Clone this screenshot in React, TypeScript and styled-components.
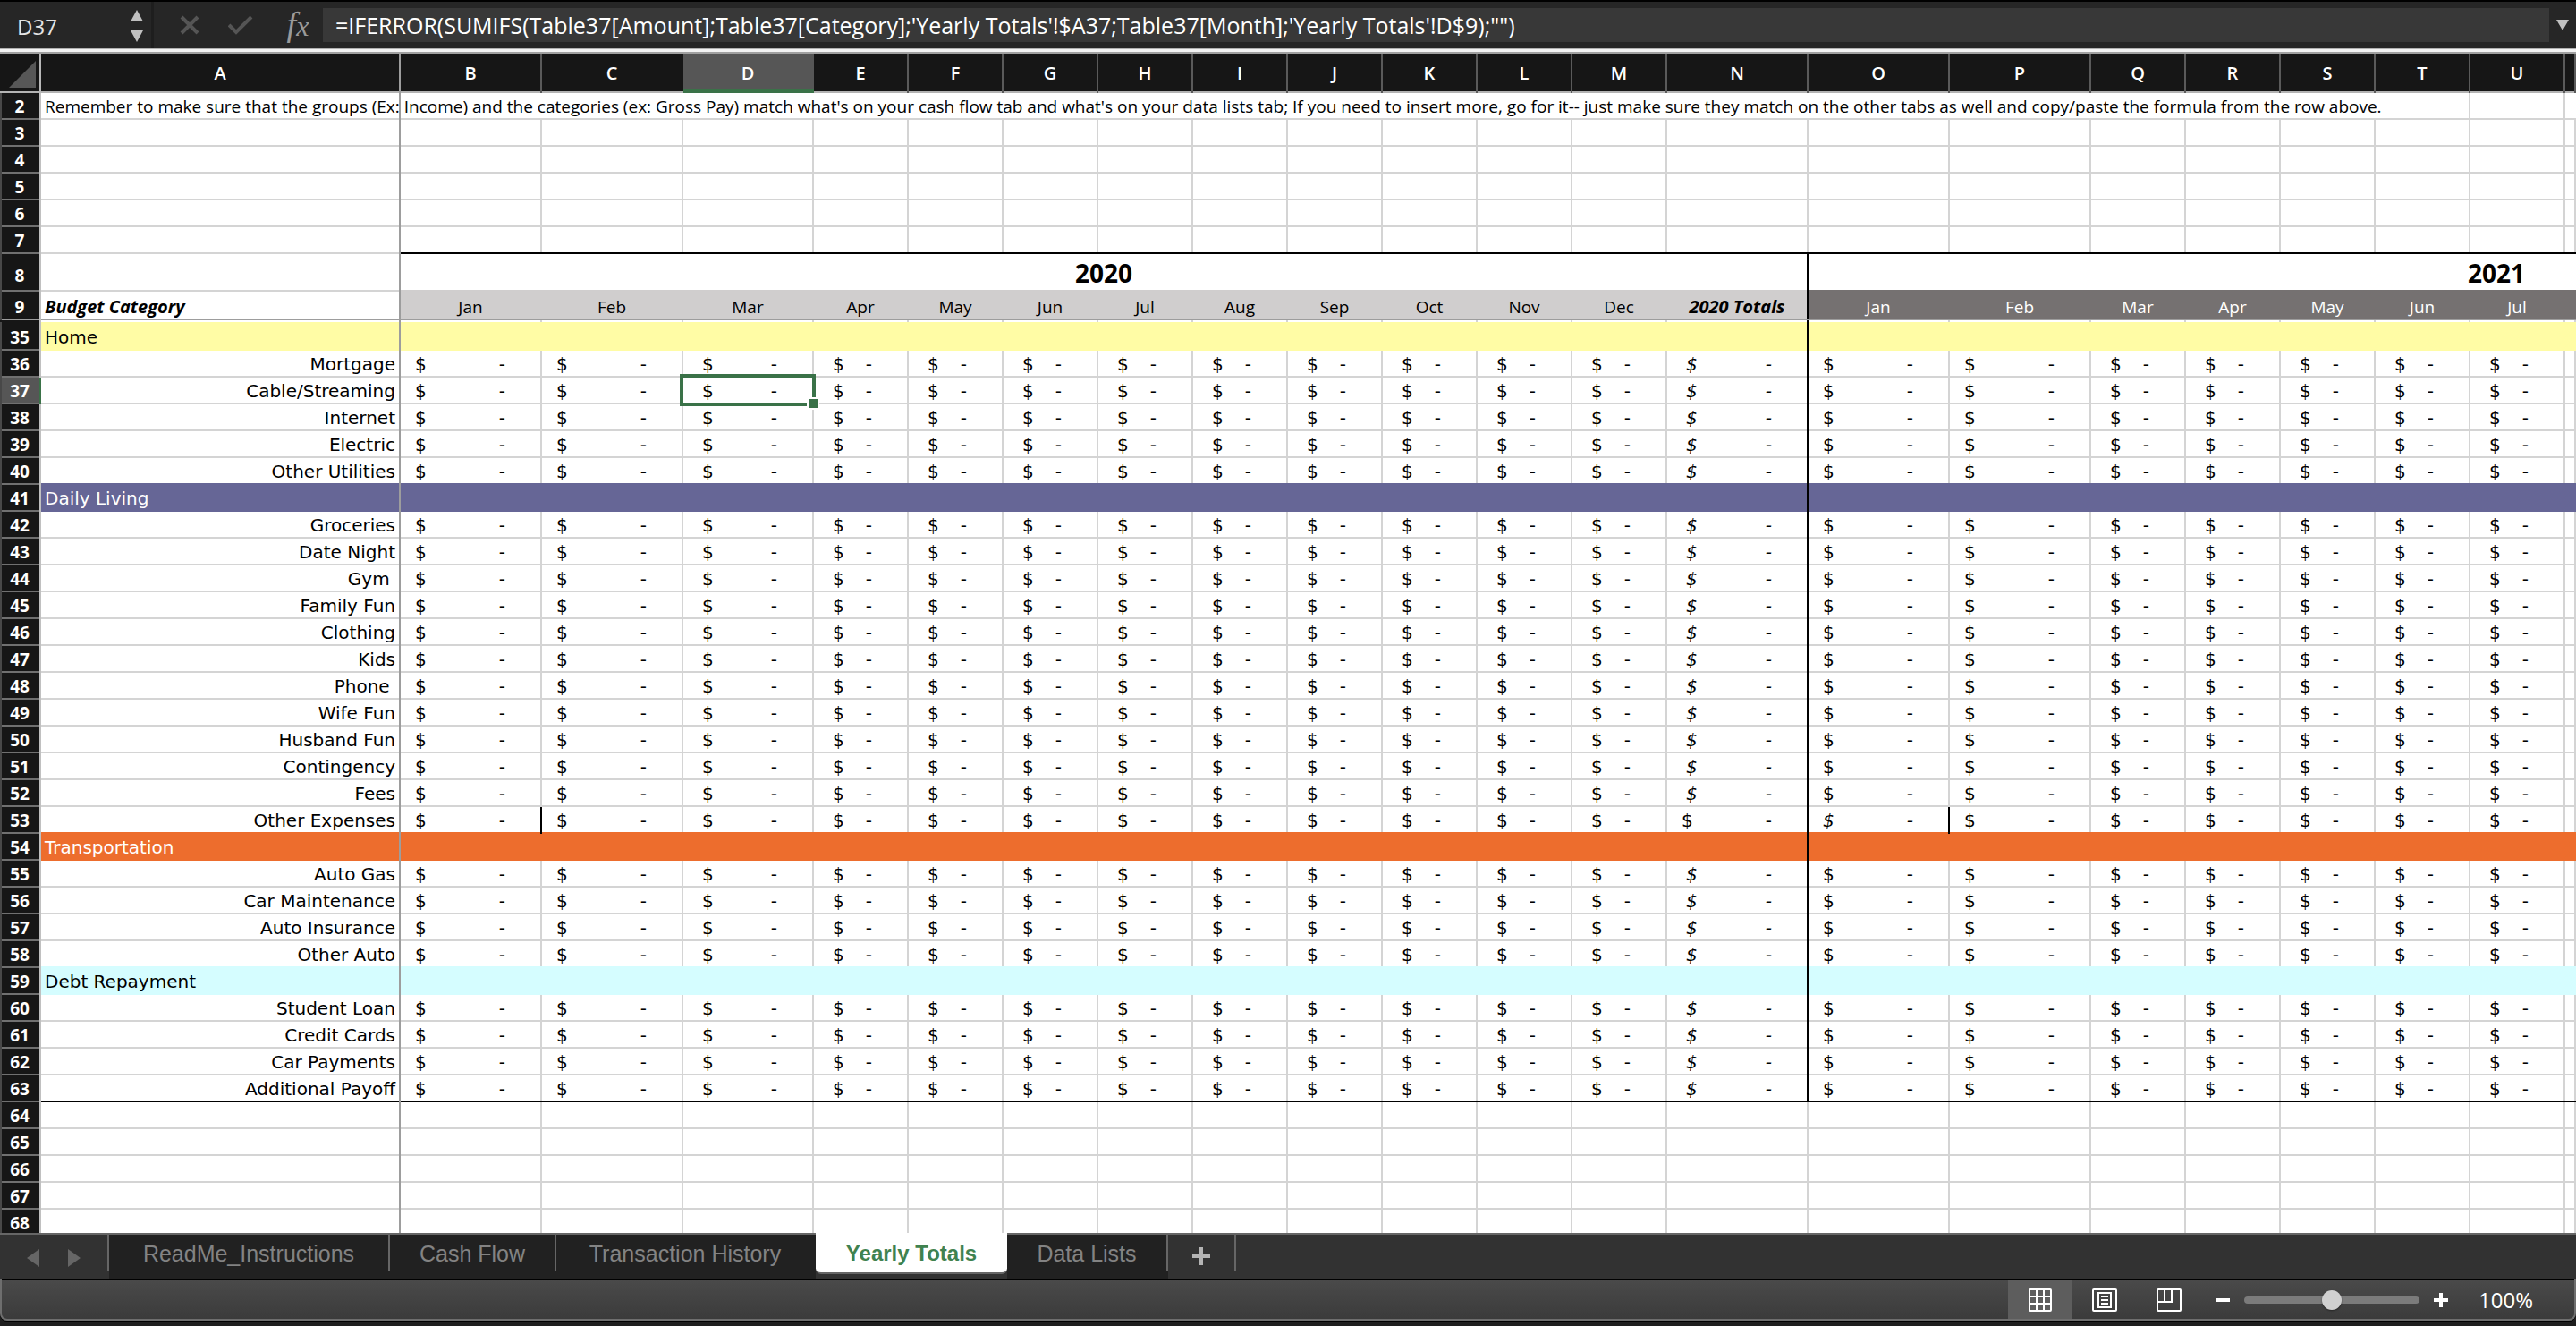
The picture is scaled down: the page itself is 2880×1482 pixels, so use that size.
import React from "react";
import styled, { createGlobalStyle, css } from "styled-components";

const UI = `"Open Sans", "Noto Sans", sans-serif`;
const BODY = `"DejaVu Sans", Verdana, sans-serif`;
const TAB = `"Liberation Sans", Arial, sans-serif`;

const GRID = "#d4d4d4";
const FREEZE = "#9d9d9d";
const BLACK = "#000000";
const GREEN = "#3a7248";
const LIGHT_HEAD = "#d0cece";
const DARK_HEAD = "#757171";

const GlobalStyle = createGlobalStyle`
  *, *::before, *::after { box-sizing: border-box; }
  body { margin: 0; background: #1e1e1e; }
  button, input { font: inherit; color: inherit; border: 0; margin: 0; padding: 0; background: none; }
`;

/* ---------- window ---------- */

const Window = styled.div`
  display: flex;
  flex-direction: column;
  height: 100vh;
  overflow: hidden;
  border-top: 2px solid #000;
  background: #1e1e1e;
  font-family: ${UI};
`;

/* ---------- formula bar ---------- */

const FormulaBar = styled.header`
  display: flex;
  flex: none;
  align-items: center;
  height: 52px;
  background: #262626;
  color: #fff;
`;

const NameBox = styled.div`
  display: flex;
  align-items: center;
  justify-content: space-between;
  align-self: stretch;
  width: 172px;
  padding: 2px 9px 0 19px;
  border-right: 3px solid #1e1e1e;
`;

const NameInput = styled.input`
  width: 100px;
  height: 38px;
  font-size: 24px;
  color: #e4e4e4;
`;

const Stepper = styled.div`
  display: flex;
  flex-direction: column;
  gap: 10px;
`;

const IconButton = styled.button`
  display: grid;
  place-items: center;
  color: ${(p: { $color?: string }) => p.$color ?? "#c0c0c0"};
`;

const Actions = styled.div`
  display: flex;
  align-items: center;
  gap: 32px;
  padding: 0 10px 0 29px;
`;

const FxButton = styled.button`
  width: 36px;
  line-height: 40px;
  font-family: "Liberation Serif", serif;
  font-size: 38px;
  font-style: italic;
  color: #9a9a9a;
  white-space: nowrap;
`;

const FxSmall = styled.span`
  font-size: 32px;
`;

const FormulaInput = styled.input`
  flex: 1;
  min-width: 0;
  height: 38px;
  padding: 0 14px;
  background: #383838;
  font-size: 25px;
`;

const ExpandSlot = styled.div`
  display: grid;
  place-items: center;
  width: 30px;
`;

const Divider = styled.div`
  flex: none;
  height: 6px;
  border-top: 1px solid #b0b0b0;
  border-bottom: 2px solid #a0a0a0;
  background: #f2f2f2;
`;

/* ---------- sheet ---------- */

const SheetArea = styled.main`
  flex: 1;
  min-height: 0;
  overflow: hidden;
  background: #fff;
`;

const Sheet = styled.table`
  width: 100%;
  table-layout: fixed;
  border-collapse: separate;
  border-spacing: 0;
  color: #000;
`;

const Col = styled.col<{ $w?: number }>`
  width: ${(p) => (p.$w ? `${p.$w}px` : "auto")};
`;

const Row = styled.tr<{ $h?: number }>`
  height: ${(p) => p.$h ?? 30}px;
`;

interface LineProps {
  $v?: string;
  $h?: string;
  $bg?: string;
  $hOver?: boolean;
}

/* Every cell draws its own right and bottom rule; heavy rules run over light ones. */
const lines = css<LineProps>`
  ${(p) => {
    const v = p.$v ?? GRID;
    const h = p.$h ?? GRID;
    const right = `linear-gradient(${v}, ${v}) right / 2px 100% no-repeat`;
    const bottom = `linear-gradient(${h}, ${h}) bottom / 100% 2px no-repeat`;
    const hFirst = p.$hOver || v === GRID || v === "transparent";
    const order = hFirst ? [bottom, right] : [right, bottom];
    return `background: ${order.join(", ")}, ${p.$bg ?? "transparent"};`;
  }}
`;

const Corner = styled.th`
  ${lines}
  height: 44px;
  padding: 8px 6px 6px 10px;
  line-height: 0;
`;

const ColumnHead = styled.th<LineProps & { $selected?: boolean }>`
  ${lines}
  padding: 0 2px 2px 0;
  font-size: 20px;
  font-weight: 600;
  color: #fff;
  ${(p) => p.$selected && `box-shadow: inset 0 -4px ${GREEN};`}
`;

const RowHead = styled.th<LineProps & { $drop?: number }>`
  ${lines}
  padding: 0 2px ${(p) => p.$drop ?? 0}px 0;
  box-shadow: inset 2px 0 #484848;
  vertical-align: bottom;
  font-size: 19px;
  line-height: 30px;
  font-weight: 700;
  color: #fff;
`;

const Cell = styled.td<LineProps>`
  ${lines}
  padding: 0;
`;

const Label = styled.td<LineProps & { $align?: string; $color?: string }>`
  ${lines}
  padding: 0 6px 0 4px;
  vertical-align: bottom;
  font-family: ${BODY};
  font-size: 20px;
  line-height: 30px;
  text-align: ${(p) => p.$align ?? "right"};
  color: ${(p) => p.$color ?? "#000"};
  white-space: pre;
`;

const Note = styled(Label)`
  font-family: ${UI};
  font-size: 19px;
  text-align: left;
`;

const SideTitle = styled(Note)`
  font-size: 20px;
  font-style: italic;
  font-weight: 700;
`;

const YearTitle = styled.th<LineProps & { $end?: boolean }>`
  ${lines}
  padding: 0 ${(p) => (p.$end ? 57 : 2)}px 0 0;
  text-align: ${(p) => (p.$end ? "right" : "center")};
  font-size: 28px;
  line-height: 40px;
  font-weight: 700;
`;

const Month = styled.td<LineProps & { $color?: string; $total?: boolean }>`
  ${lines}
  padding: 0 2px 0 0;
  vertical-align: bottom;
  text-align: center;
  font-size: 19px;
  line-height: 30px;
  white-space: nowrap;
  color: ${(p) => p.$color ?? "#000"};
  ${(p) => p.$total && "font-size: 20px; font-style: italic; font-weight: 700;"}
`;

const MoneyCell = styled.td<LineProps>`
  ${lines}
  position: relative;
  padding: 0;
`;

const Money = styled.div<{ $wide?: boolean; $italic?: boolean }>`
  display: flex;
  justify-content: space-between;
  padding: 0 41px 0 ${(p) => (p.$wide ? 16 : 21)}px;
  font-family: ${BODY};
  font-size: 20px;
  line-height: 30px;
  font-style: ${(p) => (p.$italic ? "italic" : "normal")};
`;

const Selection = styled.div`
  position: absolute;
  z-index: 1;
  inset: -4px -2px -2px -4px;
  border: 4px solid ${GREEN};
`;

const FillHandle = styled.div`
  position: absolute;
  z-index: 1;
  right: -6px;
  bottom: -6px;
  width: 14px;
  height: 14px;
  border: 2px solid #fff;
  background: ${GREEN};
`;

/* ---------- sheet tabs ---------- */

const TabBar = styled.nav`
  display: flex;
  flex: none;
  height: 52px;
  border-top: 2px solid #666;
  background: #323232;
`;

const TabNav = styled.div`
  display: flex;
  align-items: flex-start;
  gap: 32px;
  width: 122px;
  height: 41px;
  padding: 16px 0 0 30px;
  border-right: 2px solid #666;
`;

const TabSlot = styled.div<{ $w: number; $active?: boolean }>`
  width: ${(p) => p.$w}px;
  background: ${(p) => (p.$active ? "transparent" : "#212121")};
`;

const TabButton = styled.button<{ $active?: boolean; $rule?: boolean }>`
  display: block;
  width: 100%;
  height: 41px;
  padding-top: 1px;
  font-family: ${TAB};
  font-size: 25px;
  color: #838383;
  white-space: nowrap;
  border-right: 2px solid ${(p) => (p.$rule ? "#666" : "transparent")};
  ${(p) =>
    p.$active &&
    css`
      position: relative;
      height: 46px;
      margin-top: -2px;
      border: 0;
      border-bottom: 2px solid #666;
      border-radius: 0 0 6px 6px;
      background: #fff;
      color: #3f8250;
      font-size: 24px;
      font-weight: 700;
    `}
`;

const AddTab = styled.button`
  display: grid;
  place-items: center;
  width: 76px;
  height: 41px;
  padding-top: 7px;
  border-right: 2px solid #666;
  color: #b4b4b4;
`;

/* ---------- status bar ---------- */

const StatusBar = styled.footer`
  display: flex;
  flex: none;
  align-items: center;
  justify-content: flex-end;
  height: 46px;
  padding: 1px 46px 0 0;
  border: solid #6e6e6e;
  border-width: 0 2px 2px;
  border-radius: 0 0 8px 8px;
  background: linear-gradient(#4a4a4a, #3b3b3b);
  box-shadow: inset 0 1px #000, 0 1px #000;
  margin-bottom: 6px;
  color: #fff;
`;

const ViewButton = styled.button<{ $active?: boolean }>`
  display: grid;
  place-items: center;
  align-self: stretch;
  width: 72px;
  background: ${(p) => (p.$active ? "#5d5d5d" : "transparent")};
`;

const Zoom = styled.div`
  display: flex;
  align-items: center;
  gap: 16px;
  padding-left: 16px;
`;

const Slider = styled.input`
  appearance: none;
  width: 196px;
  height: 22px;
  &::-webkit-slider-runnable-track {
    height: 8px;
    border-radius: 4px;
    background: #7b7b7b;
  }
  &::-webkit-slider-thumb {
    appearance: none;
    width: 22px;
    height: 22px;
    margin-top: -7px;
    border-radius: 50%;
    background: #d0d0d0;
    box-shadow: 0 1px 2px rgba(0, 0, 0, 0.4);
  }
`;

const ZoomValue = styled.output`
  padding-left: 18px;
  font-size: 24px;
  line-height: 30px;
`;

/* ---------- icons ---------- */

const Triangle = ({ d, w, h }: { d: string; w: number; h: number }) => (
  <svg width={w} height={h} viewBox={`0 0 ${w} ${h}`} fill="currentColor" aria-hidden="true">
    <path d={d} />
  </svg>
);

const PlusIcon = ({ size, stroke }: { size: number; stroke: number }) => (
  <svg width={size} height={size} viewBox={`0 0 ${size} ${size}`} stroke="currentColor" strokeWidth={stroke} aria-hidden="true">
    <path d={`M0 ${size / 2}H${size}M${size / 2} 0V${size}`} />
  </svg>
);

const ViewIcon = ({ w, d }: { w: number; d: string }) => (
  <svg width={w} height="26" viewBox={`0 0 ${w} 26`} fill="none" stroke="#fff" strokeWidth="2" aria-hidden="true">
    <rect x="1" y="1" width={w - 2} height="24" rx="1" />
    <path d={d} />
  </svg>
);

/* ---------- data ---------- */

const COLUMNS: { name: string; w?: number }[] = [
  { name: "A", w: 402 },
  { name: "B", w: 158 },
  { name: "C", w: 158 },
  { name: "D", w: 146 },
  ..."EFGHIJKLM".split("").map((name) => ({ name, w: 106 })),
  { name: "N", w: 158 },
  { name: "O", w: 158 },
  { name: "P", w: 158 },
  ..."QRSTU".split("").map((name) => ({ name, w: 106 })),
  { name: "" },
];
const VALUES = COLUMNS.slice(1);

const MONTHS = ["Jan", "Feb", "Mar", "Apr", "May", "Jun", "Jul", "Aug", "Sep", "Oct", "Nov", "Dec"];
const HEADINGS = [...MONTHS, "2020 Totals", ...MONTHS.slice(0, 7), ""];

interface Group {
  name: string;
  bg: string;
  color: string;
  items: string[];
}

const GROUPS: Group[] = [
  { name: "Home", bg: "#fffca5", color: "#000", items: ["Mortgage", "Cable/Streaming", "Internet", "Electric", "Other Utilities"] },
  {
    name: "Daily Living",
    bg: "#666696",
    color: "#fff",
    items: ["Groceries", "Date Night", "Gym ", "Family Fun", "Clothing", "Kids", "Phone ", "Wife Fun", "Husband Fun", "Contingency", "Fees", "Other Expenses"],
  },
  { name: "Transportation", bg: "#ed6d2d", color: "#fff", items: ["Auto Gas", "Car Maintenance", "Auto Insurance", "Other Auto"] },
  { name: "Debt Repayment", bg: "#d5fdff", color: "#000", items: ["Student Loan", "Credit Cards", "Car Payments", "Additional Payoff"] },
];

const NOTE =
  "Remember to make sure that the groups (Ex: Income) and the categories (ex: Gross Pay) match what's on your cash flow tab and what's on your data lists tab; If you need to insert more, go for it-- just make sure they match on the other tabs as well and copy/paste the formula from the row above.";

const FORMULA = `=IFERROR(SUMIFS(Table37[Amount];Table37[Category];'Yearly Totals'!$A37;Table37[Month];'Yearly Totals'!D$9);"")`;

const TABS = [
  { name: "ReadMe_Instructions", w: 314, rule: true },
  { name: "Cash Flow", w: 186, rule: true },
  { name: "Transaction History", w: 290, rule: false },
  { name: "Yearly Totals", w: 214, active: true },
  { name: "Data Lists", w: 180, rule: true },
];

/* ---------- rows ---------- */

const Num = ({ n, drop, selected, h }: { n: number | string; drop?: number; selected?: boolean; h?: string }) => (
  <RowHead scope="row" $drop={drop} $v={selected ? GREEN : "#c0c0c0"} $h={h ?? "#707070"} $bg={selected ? "#565656" : "#161616"}>
    {n}
  </RowHead>
);

const EmptyRow = ({ n, rule }: { n: number; rule?: string }) => (
  <Row>
    <Num n={n} />
    <Cell $v={FREEZE} />
    {VALUES.map((c) => (
      <Cell key={c.name} $h={rule} />
    ))}
  </Row>
);

const BandRow = ({ n, group }: { n: number; group: Group }) => (
  <Row $h={n === 35 ? 32 : 30}>
    <Num n={n} />
    <Label $align="left" $color={group.color} $v={FREEZE} $h={group.bg} $bg={group.bg}>
      {group.name}
    </Label>
    {VALUES.map((c) => (
      <Cell key={c.name} $v={c.name === "N" ? BLACK : group.bg} $h={group.bg} $bg={group.bg} />
    ))}
  </Row>
);

const ItemRow = ({ n, label, rule }: { n: number; label: string; rule?: string }) => {
  const odd = n === 53;
  return (
    <Row>
      <Num n={n} selected={n === 37} />
      <Label $v={FREEZE} $h={rule}>
        {label}
      </Label>
      {VALUES.map(({ name, w }) => {
        const heavy = name === "N" || (odd && (name === "B" || name === "O"));
        const wide = w === 158 && !(name === "N" && !odd);
        return (
          <MoneyCell key={name} $v={heavy ? BLACK : GRID} $h={rule}>
            {name && (
              <Money $wide={wide} $italic={odd ? name === "O" : name === "N"}>
                <span>$</span>
                <span>-</span>
              </Money>
            )}
            {n === 37 && name === "D" && (
              <>
                <Selection />
                <FillHandle />
              </>
            )}
          </MoneyCell>
        );
      })}
    </Row>
  );
};

const budgetRows = () => {
  const out: React.ReactElement[] = [];
  let n = 35;
  GROUPS.forEach((group, g) => {
    out.push(<BandRow key={n} n={n} group={group} />);
    n += 1;
    group.items.forEach((label, i) => {
      const last = i === group.items.length - 1;
      const next = GROUPS[g + 1];
      out.push(<ItemRow key={n} n={n} label={label} rule={last ? (next ? next.bg : BLACK) : undefined} />);
      n += 1;
    });
  });
  return out;
};

export default function App() {
  return (
    <Window>
      <GlobalStyle />
      <FormulaBar>
        <NameBox>
          <NameInput aria-label="Name box" defaultValue="D37" />
          <Stepper>
            <IconButton aria-label="Previous name">
              <Triangle w={14} h={13} d="M7 0 14 13H0Z" />
            </IconButton>
            <IconButton aria-label="Next name">
              <Triangle w={14} h={13} d="M0 0H14L7 13Z" />
            </IconButton>
          </Stepper>
        </NameBox>
        <Actions>
          <IconButton aria-label="Cancel" $color="#555">
            <svg width="22" height="22" viewBox="0 0 22 22" stroke="currentColor" strokeWidth="4" aria-hidden="true">
              <path d="M2 2 20 20M20 2 2 20" />
            </svg>
          </IconButton>
          <IconButton aria-label="Enter" $color="#555">
            <svg width="28" height="22" viewBox="0 0 28 22" fill="none" stroke="currentColor" strokeWidth="4" aria-hidden="true">
              <path d="M1 11 9 19 26 2" />
            </svg>
          </IconButton>
          <FxButton aria-label="Insert function">
            f<FxSmall>x</FxSmall>
          </FxButton>
        </Actions>
        <FormulaInput aria-label="Formula" defaultValue={FORMULA} />
        <ExpandSlot>
          <IconButton aria-label="Expand formula bar">
            <Triangle w={14} h={12} d="M0 0H14L7 12Z" />
          </IconButton>
        </ExpandSlot>
      </FormulaBar>
      <Divider />

      <SheetArea>
        <Sheet>
          <colgroup>
            <Col $w={46} />
            {COLUMNS.map((c) => (
              <Col key={c.name} $w={c.w} />
            ))}
          </colgroup>
          <thead>
            <Row $h={44}>
              <Corner $v="#b8b8b8" $h="#b3b3b3" $bg="#161616">
                <svg width="30" height="30" viewBox="0 0 30 30" aria-hidden="true">
                  <path d="M30 0V30H0Z" fill="#575757" />
                </svg>
              </Corner>
              {COLUMNS.map((c) => (
                <ColumnHead
                  key={c.name}
                  scope="col"
                  $v={c.name === "A" ? FREEZE : c.name === "C" || c.name === "D" ? "transparent" : "#5a5a5a"}
                  $h="#b3b3b3"
                  $bg={c.name === "D" ? "#565656" : "#161616"}
                  $selected={c.name === "D"}
                >
                  {c.name}
                </ColumnHead>
              ))}
            </Row>
          </thead>
          <tbody>
            <Row>
              <Num n={2} />
              <Note $v={FREEZE}>{NOTE}</Note>
              {VALUES.map((c) => (
                <Cell key={c.name} $v={"TU".includes(c.name) && c.name ? GRID : "transparent"} />
              ))}
            </Row>
            {[3, 4, 5, 6].map((n) => (
              <EmptyRow key={n} n={n} />
            ))}
            <EmptyRow n={7} rule={BLACK} />
            <Row $h={42}>
              <Num n={8} drop={3} />
              <Cell $v={FREEZE} />
              <YearTitle scope="colgroup" colSpan={13} $v={BLACK} $h={LIGHT_HEAD}>
                2020
              </YearTitle>
              <YearTitle scope="colgroup" colSpan={8} $end $v="transparent" $h={DARK_HEAD}>
                2021
              </YearTitle>
            </Row>
            <Row $h={32}>
              <Num n={9} h={FREEZE} />
              <SideTitle $v={FREEZE} $h={FREEZE}>
                Budget Category
              </SideTitle>
              {HEADINGS.map((m, i) => {
                const dark = i > 12;
                return (
                  <Month
                    key={i}
                    $v={i === 12 ? BLACK : "transparent"}
                    $h={FREEZE}
                    $hOver
                    $bg={dark ? DARK_HEAD : LIGHT_HEAD}
                    $color={dark ? "#fff" : "#000"}
                    $total={i === 12}
                  >
                    {m}
                  </Month>
                );
              })}
            </Row>
            <Row $h={2}>
              <Cell $v="#c0c0c0" $h="#161616" $bg="#161616" />
              <Cell $v={FREEZE} $h="transparent" />
              {VALUES.map((c) => (
                <Cell key={c.name} $v={c.name === "N" ? BLACK : GRID} $h="transparent" />
              ))}
            </Row>
            {budgetRows()}
            {[64, 65, 66, 67, 68].map((n) => (
              <EmptyRow key={n} n={n} />
            ))}
          </tbody>
        </Sheet>
      </SheetArea>

      <TabBar aria-label="Sheets">
        <TabNav>
          <IconButton aria-label="Previous sheet" $color="#666">
            <Triangle w={14} h={20} d="M14 0V20L0 10Z" />
          </IconButton>
          <IconButton aria-label="Next sheet" $color="#666">
            <Triangle w={14} h={20} d="M0 0V20L14 10Z" />
          </IconButton>
        </TabNav>
        {TABS.map((t) => (
          <TabSlot key={t.name} $w={t.w} $active={t.active}>
            <TabButton $active={t.active} $rule={t.rule}>
              {t.name}
            </TabButton>
          </TabSlot>
        ))}
        <AddTab aria-label="Add sheet">
          <PlusIcon size={20} stroke={4} />
        </AddTab>
      </TabBar>

      <StatusBar>
        <ViewButton $active aria-label="Normal view">
          <ViewIcon w={26} d="M9 1V25M17 1V25M1 9H25M1 17H25" />
        </ViewButton>
        <ViewButton aria-label="Page layout view">
          <ViewIcon w={28} d="M7 5H21V21H7ZM10 9H18M10 13H18M10 17H18" />
        </ViewButton>
        <ViewButton aria-label="Page break preview">
          <ViewIcon w={28} d="M9 1V15M17 1V15M1 15H18" />
        </ViewButton>
        <Zoom>
          <IconButton aria-label="Zoom out" $color="#fff">
            <svg width="16" height="16" viewBox="0 0 16 16" aria-hidden="true">
              <path d="M0 8H16" stroke="currentColor" strokeWidth="4" />
            </svg>
          </IconButton>
          <Slider type="range" min={0} max={100} defaultValue={50} aria-label="Zoom" />
          <IconButton aria-label="Zoom in" $color="#fff">
            <PlusIcon size={16} stroke={4} />
          </IconButton>
          <ZoomValue>100%</ZoomValue>
        </Zoom>
      </StatusBar>
    </Window>
  );
}
